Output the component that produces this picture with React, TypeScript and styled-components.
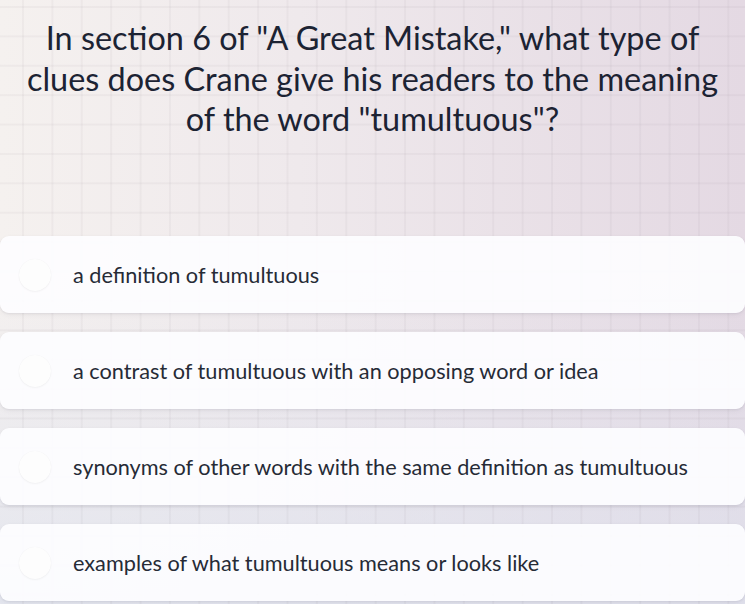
import styled, { createGlobalStyle } from "styled-components";

const GlobalStyle = createGlobalStyle`
  html, body {
    margin: 0;
    padding: 0;
  }
  body {
    font-family: Lato, "Open Sans", sans-serif;
    width: 745px;
    height: 604px;
    overflow: hidden;
  }
`;

const Page = styled.div`
  width: 745px;
  height: 604px;
  overflow: hidden;
  background-color: #f1ecee;
  background-image:
    linear-gradient(rgba(120, 110, 120, 0.06) 2px, transparent 2px),
    linear-gradient(90deg, rgba(120, 110, 120, 0.06) 2px, transparent 2px),
    linear-gradient(180deg, rgba(225, 228, 240, 0) 45%, rgba(222, 226, 238, 0.75) 100%),
    linear-gradient(90deg, #f5f1ef 0%, #efe9ec 40%, #e4d9e3 100%);
  background-size: 29.4px 29.4px, 29.4px 29.4px, 100% 100%, 100% 100%;
  background-position: 0 6px, 22px 0, 0 0, 0 0;
  display: flex;
  flex-direction: column;
`;

const Question = styled.h1`
  margin: 0;
  padding: 18px 12px 0;
  height: 236px;
  box-sizing: border-box;
  text-align: center;
  font-family: Lato, sans-serif;
  font-weight: 400;
  font-size: 32.4px;
  line-height: 40.5px;
  color: #1c2333;
`;

const Options = styled.div`
  display: flex;
  flex-direction: column;
  gap: 19px;
`;

const Option = styled.div`
  height: 77px;
  box-sizing: border-box;
  display: flex;
  align-items: center;
  gap: 22px;
  padding-left: 19px;
  background: rgba(253, 253, 255, 0.93);
  border-radius: 9px;
  box-shadow: 0 1px 2px rgba(60, 60, 90, 0.08), 0 2px 5px rgba(60, 60, 90, 0.06);
`;

const Radio = styled.span`
  width: 32px;
  height: 32px;
  border-radius: 50%;
  flex: none;
  background: #fdfdfd;
  box-shadow: 0 0 1px rgba(0, 0, 0, 0.06), 0 1px 2px rgba(0, 0, 0, 0.04);
`;

const Label = styled.span`
  font-family: Lato, sans-serif;
  font-size: 21.7px;
  color: #262b36;
`;

const answers = [
  "a definition of tumultuous",
  "a contrast of tumultuous with an opposing word or idea",
  "synonyms of other words with the same definition as tumultuous",
  "examples of what tumultuous means or looks like",
];

export default function App() {
  return (
    <>
      <GlobalStyle />
      <Page>
        <Question>
          In section 6 of "A Great Mistake," what type of clues does Crane give his readers to the meaning of the word "tumultuous"?
        </Question>
        <Options>
          {answers.map((a) => (
            <Option key={a}>
              <Radio />
              <Label>{a}</Label>
            </Option>
          ))}
        </Options>
      </Page>
    </>
  );
}
